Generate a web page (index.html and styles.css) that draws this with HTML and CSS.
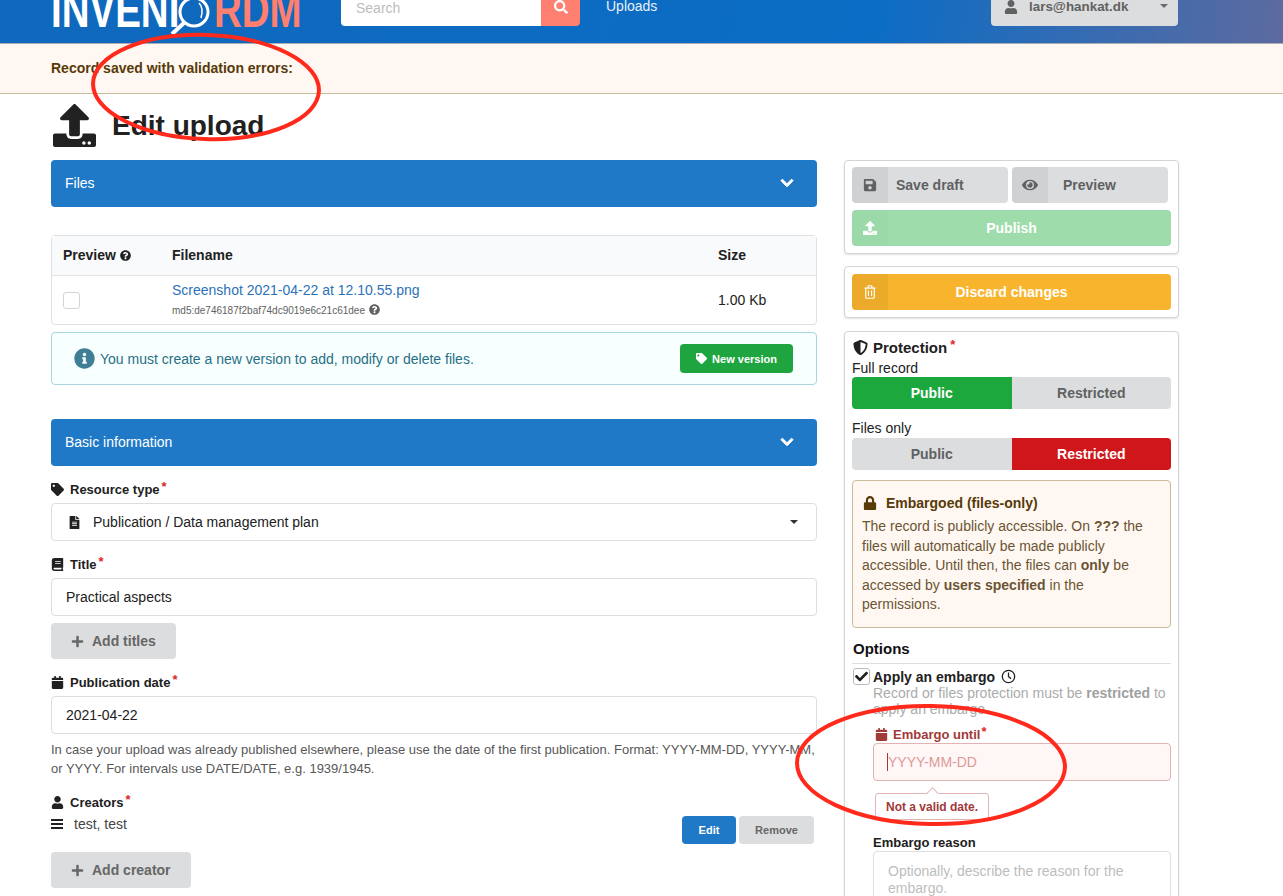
FILE: index.html
```html
<!DOCTYPE html>
<html lang="en">
<head>
    <meta charset="UTF-8">
    <meta name="viewport" content="width=device-width, initial-scale=1.0">
    <title>Edit upload</title>
    <link rel="stylesheet" href="styles.css">
</head>
<body>
    <svg class="icon-defs" aria-hidden="true">
        <symbol id="i-upload" viewBox="0 0 512 512"><path d="M296 384h-80c-13.3 0-24-10.7-24-24V192h-87.7c-17.8 0-26.7-21.5-14.1-34.1L242.3 5.7c7.5-7.5 19.8-7.5 27.3 0l152.2 152.2c12.6 12.6 3.7 34.1-14.1 34.1H320v168c0 13.3-10.7 24-24 24zm216-8v112c0 13.3-10.7 24-24 24H24c-13.3 0-24-10.7-24-24V376c0-13.3 10.7-24 24-24h136v8c0 30.9 25.1 56 56 56h80c30.9 0 56-25.1 56-56v-8h136c13.3 0 24 10.7 24 24zm-124 88c0-11-9-20-20-20s-20 9-20 20 9 20 20 20 20-9 20-20zm64 0c0-11-9-20-20-20s-20 9-20 20 9 20 20 20 20-9 20-20z"/></symbol>
        <symbol id="i-search" viewBox="0 0 512 512"><path d="M505 442.7L405.3 343c-4.5-4.5-10.6-7-17-7H372c27.6-35.3 44-79.7 44-128C416 93.1 322.9 0 208 0S0 93.1 0 208s93.1 208 208 208c48.3 0 92.7-16.4 128-44v16.3c0 6.4 2.5 12.5 7 17l99.7 99.7c9.4 9.4 24.6 9.4 33.9 0l28.3-28.3c9.4-9.4 9.4-24.6.1-34zM208 336c-70.7 0-128-57.2-128-128 0-70.7 57.2-128 128-128 70.7 0 128 57.2 128 128 0 70.7-57.2 128-128 128z"/></symbol>
        <symbol id="i-user" viewBox="0 0 448 512"><path d="M224 256c70.7 0 128-57.3 128-128S294.7 0 224 0 96 57.3 96 128s57.3 128 128 128zm89.6 32h-16.7c-22.2 10.2-46.9 16-72.9 16s-50.6-5.8-72.9-16h-16.7C60.2 288 0 348.2 0 422.4V464c0 26.5 21.5 48 48 48h352c26.5 0 48-21.5 48-48v-41.6c0-74.2-60.2-134.4-134.4-134.4z"/></symbol>
        <symbol id="i-chevron" viewBox="0 0 448 512"><path d="M207.029 381.476L12.686 187.132c-9.373-9.373-9.373-24.569 0-33.941l22.667-22.667c9.357-9.357 24.522-9.375 33.901-.04L224 284.505l154.745-154.021c9.379-9.335 24.544-9.317 33.901.04l22.667 22.667c9.373 9.373 9.373 24.569 0 33.941L240.971 381.476c-9.373 9.372-24.569 9.372-33.942 0z"/></symbol>
        <symbol id="i-save" viewBox="0 0 448 512"><path d="M433.941 129.941l-83.882-83.882A48 48 0 0 0 316.118 32H48C21.49 32 0 53.49 0 80v352c0 26.51 21.49 48 48 48h352c26.51 0 48-21.49 48-48V163.882a48 48 0 0 0-14.059-33.941zM224 416c-35.346 0-64-28.654-64-64 0-35.346 28.654-64 64-64s64 28.654 64 64c0 35.346-28.654 64-64 64zm96-304.52V212c0 6.627-5.373 12-12 12H76c-6.627 0-12-5.373-12-12V108c0-6.627 5.373-12 12-12h228.52c3.183 0 6.235 1.264 8.485 3.515l3.48 3.48A11.996 11.996 0 0 1 320 111.48z"/></symbol>
        <symbol id="i-eye" viewBox="0 0 576 512"><path d="M572.52 241.4C518.29 135.59 410.93 64 288 64S57.68 135.64 3.48 241.41a32.35 32.35 0 0 0 0 29.19C57.71 376.41 165.07 448 288 448s230.32-71.64 284.52-177.41a32.35 32.35 0 0 0 0-29.19zM288 400a144 144 0 1 1 144-144 143.93 143.93 0 0 1-144 144zm0-240a95.31 95.31 0 0 0-25.31 3.79 47.85 47.85 0 0 1-66.9 66.9A95.78 95.78 0 1 0 288 160z"/></symbol>
        <symbol id="i-trash" viewBox="0 0 16 18"><path d="M1 4h14M5.5 4V2a1 1 0 0 1 1-1h3a1 1 0 0 1 1 1v2M2.5 4v12a1 1 0 0 0 1 1h9a1 1 0 0 0 1-1V4M6 7v7M10 7v7" fill="none" stroke="currentColor" stroke-width="1.5"/></symbol>
        <symbol id="i-question" viewBox="0 0 512 512"><path d="M504 256c0 136.997-111.043 248-248 248S8 392.997 8 256C8 119.083 119.043 8 256 8s248 111.083 248 248zM262.655 90c-54.497 0-89.255 22.957-116.549 63.758-3.536 5.286-2.353 12.415 2.715 16.258l34.699 26.31c5.205 3.947 12.621 3.008 16.665-2.122 17.864-22.658 30.113-35.797 57.303-35.797 20.429 0 45.698 13.148 45.698 32.958 0 14.976-12.363 22.667-32.534 33.976C247.128 238.528 216 254.941 216 296v4c0 6.627 5.373 12 12 12h56c6.627 0 12-5.373 12-12v-1.333c0-28.462 83.186-29.647 83.186-106.667 0-58.002-60.165-102-116.531-102zM256 338c-25.365 0-46 20.635-46 46 0 25.364 20.635 46 46 46s46-20.636 46-46c0-25.365-20.635-46-46-46z"/></symbol>
        <symbol id="i-info" viewBox="0 0 512 512"><path d="M256 8C119.043 8 8 119.083 8 256c0 136.997 111.043 248 248 248s248-111.003 248-248C504 119.083 392.957 8 256 8zm0 110c23.196 0 42 18.804 42 42s-18.804 42-42 42-42-18.804-42-42 18.804-42 42-42zm56 254c0 6.627-5.373 12-12 12h-88c-6.627 0-12-5.373-12-12v-24c0-6.627 5.373-12 12-12h12v-64h-12c-6.627 0-12-5.373-12-12v-24c0-6.627 5.373-12 12-12h64c6.627 0 12 5.373 12 12v100h12c6.627 0 12 5.373 12 12v24z"/></symbol>
        <symbol id="i-tag" viewBox="0 0 512 512"><path d="M0 252.118V48C0 21.49 21.49 0 48 0h204.118a48 48 0 0 1 33.941 14.059l211.882 211.882c18.745 18.745 18.745 49.137 0 67.882L293.823 497.941c-18.745 18.745-49.137 18.745-67.882 0L14.059 286.059A48 48 0 0 1 0 252.118zM112 64c-26.51 0-48 21.49-48 48s21.49 48 48 48 48-21.49 48-48-21.49-48-48-48z"/></symbol>
        <symbol id="i-file" viewBox="0 0 384 512"><path d="M224 136V0H24C10.7 0 0 10.7 0 24v464c0 13.3 10.7 24 24 24h336c13.3 0 24-10.7 24-24V160H248c-13.2 0-24-10.8-24-24zm64 236c0 6.6-5.4 12-12 12H108c-6.6 0-12-5.4-12-12v-8c0-6.6 5.4-12 12-12h168c6.6 0 12 5.4 12 12v8zm0-64c0 6.6-5.4 12-12 12H108c-6.6 0-12-5.4-12-12v-8c0-6.6 5.4-12 12-12h168c6.6 0 12 5.4 12 12v8zm0-72v8c0 6.6-5.4 12-12 12H108c-6.6 0-12-5.4-12-12v-8c0-6.6 5.4-12 12-12h168c6.6 0 12 5.4 12 12zm96-114.1v6.1H256V0h6.1c6.4 0 12.5 2.5 17 7l97.9 98c4.5 4.5 7 10.6 7 16.9z"/></symbol>
        <symbol id="i-book" viewBox="0 0 448 512"><path d="M448 360V24c0-13.3-10.7-24-24-24H96C43 0 0 43 0 96v320c0 53 43 96 96 96h328c13.3 0 24-10.7 24-24v-16c0-7.5-3.5-14.3-8.9-18.7-4.2-15.4-4.2-59.3 0-74.7 5.4-4.3 8.9-11.1 8.9-18.6zM128 134c0-3.3 2.7-6 6-6h212c3.3 0 6 2.7 6 6v20c0 3.3-2.7 6-6 6H134c-3.3 0-6-2.7-6-6v-20zm0 64c0-3.3 2.7-6 6-6h212c3.3 0 6 2.7 6 6v20c0 3.3-2.7 6-6 6H134c-3.3 0-6-2.7-6-6v-20zm253.4 250H96c-17.7 0-32-14.3-32-32 0-17.6 14.4-32 32-32h285.4c-1.9 17.1-1.9 46.9 0 64z"/></symbol>
        <symbol id="i-calendar" viewBox="0 0 448 512"><path d="M12 192h424c6.6 0 12 5.4 12 12v260c0 26.5-21.5 48-48 48H48c-26.5 0-48-21.5-48-48V204c0-6.6 5.4-12 12-12zm436-44v-36c0-26.5-21.5-48-48-48h-48V12c0-6.6-5.4-12-12-12h-40c-6.6 0-12 5.4-12 12v52H160V12c0-6.6-5.4-12-12-12h-40c-6.6 0-12 5.4-12 12v52H48C21.5 64 0 85.5 0 112v36c0 6.6 5.4 12 12 12h424c6.6 0 12-5.4 12-12z"/></symbol>
        <symbol id="i-plus" viewBox="0 0 448 512"><path d="M416 208H272V64c0-17.67-14.33-32-32-32h-32c-17.67 0-32 14.33-32 32v144H32c-17.67 0-32 14.33-32 32v32c0 17.67 14.33 32 32 32h144v144c0 17.67 14.33 32 32 32h32c17.67 0 32-14.33 32-32V304h144c17.67 0 32-14.33 32-32v-32c0-17.67-14.33-32-32-32z"/></symbol>
        <symbol id="i-lock" viewBox="0 0 448 512"><path d="M400 224h-24v-72C376 68.2 307.8 0 224 0S72 68.2 72 152v72H48c-26.5 0-48 21.5-48 48v192c0 26.5 21.5 48 48 48h352c26.5 0 48-21.5 48-48V272c0-26.5-21.5-48-48-48zm-104 0H152v-72c0-39.7 32.3-72 72-72s72 32.3 72 72v72z"/></symbol>
        <symbol id="i-shield" viewBox="0 0 512 512"><path d="M466.5 83.7l-192-80a48.15 48.15 0 0 0-36.9 0l-192 80C27.7 91.1 16 108.6 16 128c0 198.5 114.5 335.7 221.5 380.3 11.8 4.9 25.1 4.9 36.9 0C360.1 472.6 496 349.3 496 128c0-19.4-11.7-36.9-29.5-44.3zM256.1 446.3l-.1-381 175.9 73.3c-3.3 151.4-82.1 261.1-175.8 307.7z"/></symbol>
        <symbol id="i-check" viewBox="0 0 512 512"><path d="M173.898 439.404l-166.4-166.4c-9.997-9.997-9.997-26.206 0-36.204l36.203-36.204c9.997-9.998 26.207-9.998 36.204 0L192 312.69 432.095 72.596c9.997-9.997 26.207-9.997 36.204 0l36.203 36.204c9.997 9.997 9.997 26.206 0 36.204l-294.4 294.401c-9.998 9.997-26.207 9.997-36.204-.001z"/></symbol>
        <symbol id="i-clock" viewBox="0 0 16 16"><circle cx="8" cy="8" r="6.6" fill="none" stroke="currentColor" stroke-width="1.4"/><path d="M8 3.8V8.3l2.8 2" fill="none" stroke="currentColor" stroke-width="1.4"/></symbol>
        <symbol id="i-bars" viewBox="0 0 12 12"><path d="M0 1h12v2H0zM0 5h12v2H0zM0 9h12v2H0z"/></symbol>
    </svg>

    <div class="page">
        <header class="topbar">
            <a class="logo">
                <span class="logo-word logo-invenio">INVENI</span>
                <span class="logo-word logo-rdm">RDM</span>
                <svg class="logo-lens" viewBox="0 0 50 40"><circle cx="24" cy="12" r="14" fill="none" stroke="#fff" stroke-width="3"/><path d="M15 22L2 34" fill="none" stroke="#fff" stroke-width="4"/><path d="M29 3q5 5 2 15" fill="none" stroke="#fff" stroke-width="1.5"/></svg>
            </a>
            <div class="search">
                <input class="search-input" type="text" placeholder="Search">
                <button class="search-btn"><svg class="icon icon-14"><use href="#i-search"/></svg></button>
            </div>
            <a class="nav-link">Uploads</a>
            <div class="user-menu">
                <svg class="icon icon-14"><use href="#i-user"/></svg>
                <span class="user-name">lars@hankat.dk</span>
                <span class="caret"></span>
            </div>
        </header>

        <div class="flash">Record saved with validation errors:</div>

        <div class="page-title">
            <svg class="title-icon"><use href="#i-upload"/></svg>
            <h1>Edit upload</h1>
        </div>

        <main class="columns">
            <section class="col-left">
                <div class="acc-head">
                    <span>Files</span>
                    <svg class="icon icon-14 chevron"><use href="#i-chevron"/></svg>
                </div>

                <table class="files">
                    <thead>
                        <tr>
                            <th class="col-preview">Preview <svg class="icon icon-11"><use href="#i-question"/></svg></th>
                            <th class="col-name">Filename</th>
                            <th>Size</th>
                        </tr>
                    </thead>
                    <tbody>
                        <tr>
                            <td><span class="checkbox"></span></td>
                            <td>
                                <a class="file-link">Screenshot 2021-04-22 at 12.10.55.png</a>
                                <div class="md5">md5:de746187f2baf74dc9019e6c21c61dee <svg class="icon icon-11"><use href="#i-question"/></svg></div>
                            </td>
                            <td>1.00 Kb</td>
                        </tr>
                    </tbody>
                </table>

                <div class="info-msg">
                    <svg class="info-icon"><use href="#i-info"/></svg>
                    <span class="info-text">You must create a new version to add, modify or delete files.</span>
                    <button class="btn-new"><svg class="icon icon-11"><use href="#i-tag"/></svg>New version</button>
                </div>

                <div class="acc-head acc-basic">
                    <span>Basic information</span>
                    <svg class="icon icon-14 chevron"><use href="#i-chevron"/></svg>
                </div>

                <label class="field-label"><svg class="icon icon-13"><use href="#i-tag"/></svg>Resource type<sup>*</sup></label>
                <div class="select">
                    <svg class="icon icon-13"><use href="#i-file"/></svg>
                    <span>Publication / Data management plan</span>
                    <span class="caret caret-dark"></span>
                </div>

                <label class="field-label"><svg class="icon icon-13"><use href="#i-book"/></svg>Title<sup>*</sup></label>
                <input class="text-input" type="text" value="Practical aspects">
                <button class="btn-add btn-titles"><svg class="icon icon-13"><use href="#i-plus"/></svg>Add titles</button>

                <label class="field-label"><svg class="icon icon-13"><use href="#i-calendar"/></svg>Publication date<sup>*</sup></label>
                <input class="text-input" type="text" value="2021-04-22">
                <p class="help">In case your upload was already published elsewhere, please use the date of the first publication. Format: YYYY-MM-DD, YYYY-MM, or YYYY. For intervals use DATE/DATE, e.g. 1939/1945.</p>

                <label class="field-label field-creators"><svg class="icon icon-13"><use href="#i-user"/></svg>Creators<sup>*</sup></label>
                <div class="creator-row">
                    <svg class="icon icon-12"><use href="#i-bars"/></svg>
                    <span class="creator-name">test, test</span>
                    <button class="btn-small btn-edit">Edit</button>
                    <button class="btn-small btn-remove">Remove</button>
                </div>
                <button class="btn-add btn-creator"><svg class="icon icon-13"><use href="#i-plus"/></svg>Add creator</button>
            </section>

            <aside class="col-right">
                <div class="card">
                    <div class="action-row">
                        <button class="btn-labeled btn-grey"><span class="btn-ico"><svg class="icon icon-14"><use href="#i-save"/></svg></span><span class="btn-text btn-text-left">Save draft</span></button>
                        <button class="btn-labeled btn-grey"><span class="btn-ico"><svg class="icon icon-16"><use href="#i-eye"/></svg></span><span class="btn-text btn-text-left">Preview</span></button>
                    </div>
                    <button class="btn-labeled btn-publish"><span class="btn-ico"><svg class="icon icon-14"><use href="#i-upload"/></svg></span><span class="btn-text">Publish</span></button>
                </div>

                <div class="card card-discard">
                    <button class="btn-labeled btn-discard"><span class="btn-ico"><svg class="icon icon-14"><use href="#i-trash"/></svg></span><span class="btn-text">Discard changes</span></button>
                </div>

                <div class="card card-protection">
                    <div class="prot-head"><svg class="icon icon-15"><use href="#i-shield"/></svg>Protection<sup>*</sup></div>
                    <div class="prot-sub">Full record</div>
                    <div class="toggle">
                        <span class="toggle-opt toggle-green">Public</span>
                        <span class="toggle-opt">Restricted</span>
                    </div>
                    <div class="prot-sub prot-files">Files only</div>
                    <div class="toggle">
                        <span class="toggle-opt">Public</span>
                        <span class="toggle-opt toggle-red">Restricted</span>
                    </div>

                    <div class="embargo-box">
                        <div class="embargo-title"><svg class="icon icon-14"><use href="#i-lock"/></svg>Embargoed (files-only)</div>
                        <p>The record is publicly accessible. On <b>???</b> the files will automatically be made publicly accessible. Until then, the files can <b>only</b> be accessed by <b>users specified</b> in the permissions.</p>
                    </div>

                    <div class="options-head">Options</div>
                    <div class="option-row">
                        <span class="checkbox checkbox-on"><svg class="icon icon-13"><use href="#i-check"/></svg></span>
                        <span class="option-name">Apply an embargo</span>
                        <svg class="icon icon-15"><use href="#i-clock"/></svg>
                    </div>
                    <div class="option-body">
                        <p class="option-help">Record or files protection must be <b>restricted</b> to apply an embargo.</p>
                        <label class="field-label label-error"><svg class="icon icon-13"><use href="#i-calendar"/></svg>Embargo until<sup>*</sup></label>
                        <div class="date-wrap">
                            <input class="text-input input-error" type="text" placeholder="YYYY-MM-DD">
                            <span class="text-caret"></span>
                        </div>
                        <div class="error-tip">Not a valid date.</div>
                        <label class="field-label label-reason">Embargo reason</label>
                        <textarea class="reason" placeholder="Optionally, describe the reason for the embargo."></textarea>
                    </div>
                </div>
            </aside>
        </main>

        <svg class="scribble" viewBox="0 0 1283 896">
            <ellipse cx="206" cy="87" rx="113" ry="52" transform="rotate(2 206 87)"/>
            <ellipse cx="931" cy="765" rx="134" ry="59" transform="rotate(1 931 765)"/>
        </svg>
    </div>
</body>
</html>
```

FILE: styles.css
```css
* {
    box-sizing: border-box;
}
html, body {
    margin: 0;
    overflow: hidden;
}
body {
    font-family: "Liberation Sans", Arial, sans-serif;
    font-size: 14px;
    color: #212121;
    background-color: #fff;
}
button, input, textarea {
    font-family: inherit;
}
.icon-defs {
    display: none;
}
.page {
    position: relative;
    height: 896px;
    overflow: hidden;
}
.icon {
    fill: currentColor;
    flex: none;
}
.icon-11 { width: 11px; height: 11px; }
.icon-12 { width: 12px; height: 12px; }
.icon-13 { width: 13px; height: 13px; }
.icon-14 { width: 14px; height: 14px; }
.icon-15 { width: 15px; height: 15px; }
.icon-16 { width: 16px; height: 16px; }

/* top bar, cropped by the top of the window */
.topbar {
    height: 44px;
    display: flex;
    align-items: flex-end;
    padding: 0 105px 18px 51px;
    overflow: hidden;
    background: linear-gradient(100deg, #0f68bc 0%, #0b6dc5 68%, #5d6aa0 100%);
    border-bottom: 1px solid #a9aeb3;
}
.logo {
    position: relative;
    flex: none;
    width: 290px;
    height: 36px;
    margin-bottom: -3px;
    display: flex;
}
.logo-word {
    display: block;
    font-size: 50px;
    line-height: 36px;
    font-weight: bold;
    transform: scaleX(0.77);
    transform-origin: left;
    white-space: nowrap;
}
.logo-invenio {
    width: 163px;
    color: #fff;
}
.logo-rdm {
    color: #ff7f70;
}
.logo-lens {
    position: absolute;
    left: 119px;
    top: 8px;
    width: 50px;
    height: 40px;
    overflow: visible;
}
.search {
    width: 239px;
    height: 36px;
    display: flex;
    flex: none;
    border-radius: 4px;
    overflow: hidden;
    margin-bottom: -1px;
}
.search-input {
    flex: 1;
    min-width: 0;
    border: 0;
    padding: 0 15px;
    font-size: 14px;
    background-color: #fff;
}
.search-input::placeholder {
    color: #bdbdbd;
}
.search-btn {
    width: 39px;
    border: 0;
    padding: 0;
    color: #fff;
    background-color: #ff7f70;
}
.nav-link {
    margin: 0 auto 11px 26px;
    color: #e8f0f8;
}
.user-menu {
    width: 187px;
    height: 36px;
    display: flex;
    align-items: center;
    flex: none;
    padding: 0 10px 0 13px;
    margin-bottom: -1px;
    border-radius: 0 0 4px 4px;
    background-color: #dcddde;
    color: #616161;
    font-size: 13.4px;
    font-weight: bold;
}
.user-menu .icon {
    align-self: flex-end;
    margin-bottom: 12px;
}
.user-name {
    margin-left: 11px;
    align-self: flex-end;
    margin-bottom: 12px;
}
.caret {
    width: 0;
    height: 0;
    margin-left: auto;
    margin-bottom: 4px;
    border-left: 4px solid transparent;
    border-right: 4px solid transparent;
    border-top: 4px solid #6b6b6b;
}
.flash {
    height: 50px;
    padding: 16px 51px 0;
    font-weight: bold;
    color: #573a08;
    background-color: #fff8f2;
    border-bottom: 1px solid #c9ba9b;
}
.page-title {
    height: 66px;
    display: flex;
    align-items: center;
    padding: 0 0 4px 53px;
}
.title-icon {
    width: 43px;
    height: 43px;
    fill: #212121;
}
h1 {
    margin: 2px 0 0 16px;
    font-size: 28px;
    line-height: 32px;
    font-weight: bold;
}

.columns {
    display: flex;
    padding-left: 51px;
}
.col-left {
    flex: none;
    width: 766px;
}
.col-right {
    flex: none;
    width: 335px;
    margin-left: 27px;
}

/* left column */
.acc-head {
    height: 47px;
    padding: 0 23px 2px 14px;
    display: flex;
    align-items: center;
    justify-content: space-between;
    color: #fff;
    background-color: #2079c7;
    border-radius: 4px;
}
.chevron {
    stroke: currentColor;
    stroke-width: 36;
}
.files {
    width: 100%;
    height: 90px;
    margin-top: 28px;
    border: 1px solid #e0e1e2;
    border-radius: 4px;
    border-spacing: 0;
    table-layout: fixed;
}
.files th {
    height: 40px;
    padding: 0 0 2px 11px;
    text-align: left;
    background-color: #f9fafb;
    border-bottom: 1px solid #e3e4e5;
}
.files th .icon {
    vertical-align: -1px;
}
.files td {
    padding: 0 0 0 11px;
}
.col-preview {
    width: 109px;
}
.col-name {
    width: 546px;
}
.file-link {
    color: #2b72b8;
}
.md5 {
    margin-top: 6px;
    font-size: 10px;
    line-height: 14px;
    color: #616161;
}
.md5 .icon {
    vertical-align: -1px;
    margin-left: 1px;
}
.checkbox {
    display: flex;
    align-items: center;
    justify-content: center;
    width: 17px;
    height: 17px;
    border: 1px solid #d4d4d5;
    border-radius: 3px;
    background-color: #fff;
}
.info-msg {
    height: 53px;
    margin-top: 7px;
    padding: 0 23px 0 24px;
    display: flex;
    align-items: center;
    color: #276f86;
    background-color: #f8ffff;
    border: 1px solid #a9d5de;
    border-radius: 4px;
}
.info-icon {
    width: 21px;
    height: 21px;
    flex: none;
    fill: #3f7f96;
    margin-left: -2px;
}
.info-text {
    margin-left: 5px;
}
.btn-new {
    width: 113px;
    height: 29px;
    margin-left: auto;
    border: 0;
    border-radius: 4px;
    color: #fff;
    font-size: 11px;
    font-weight: bold;
    background-color: #1fa53f;
    display: flex;
    align-items: center;
    justify-content: center;
    gap: 5px;
}
.acc-basic {
    margin-top: 34px;
}
.field-label {
    display: flex;
    align-items: center;
    gap: 6px;
    height: 16px;
    margin: 15px 0 6px;
    font-size: 13px;
    font-weight: bold;
}
.field-label sup {
    color: #db2828;
    font-size: 13px;
    line-height: 1;
    margin: -6px 0 0 -4px;
}
.select, .text-input {
    width: 100%;
    height: 38px;
    display: flex;
    align-items: center;
    padding: 0 14px;
    font-size: 14px;
    color: #212121;
    background-color: #fff;
    border: 1px solid #dedede;
    border-radius: 4px;
}
.select {
    padding: 0 18px 0 16px;
}
.select span:first-of-type {
    margin-left: 12px;
}
.caret-dark {
    margin-bottom: 0;
    border-top-color: #333;
}
.btn-add {
    height: 36px;
    display: flex;
    align-items: center;
    border: 0;
    padding: 0 0 0 20px;
    gap: 8px;
    font-size: 14px;
    font-weight: bold;
    color: #666;
    background-color: #dcddde;
    border-radius: 4px;
}
.btn-titles {
    width: 125px;
    margin-top: 7px;
}
.btn-creator {
    width: 140px;
    margin-top: 8px;
}
.help {
    margin: 6px 0 0;
    font-size: 13px;
    line-height: 19px;
    color: #575757;
}
.field-creators {
    margin-top: 16px;
}
.creator-row {
    height: 28px;
    display: flex;
    align-items: flex-start;
    padding-right: 3px;
    gap: 3px;
}
.creator-row > .icon {
    margin-top: 2px;
}
.creator-name {
    margin: 0 auto 0 8px;
    line-height: 16px;
    color: #444;
}
.btn-small {
    height: 28px;
    border: 0;
    border-radius: 4px;
    font-size: 11px;
    font-weight: bold;
}
.btn-edit {
    width: 54px;
    color: #fff;
    background-color: #2079c7;
}
.btn-remove {
    width: 75px;
    color: #666;
    background-color: #dcddde;
}

/* right column */
.card {
    padding: 6px 7px 7px;
    background-color: #fff;
    border: 1px solid #d4d4d5;
    border-radius: 4px;
    box-shadow: 0 1px 2px rgba(34, 36, 38, 0.12);
}
.action-row {
    display: flex;
    gap: 4px;
    margin-bottom: 7px;
}
.btn-labeled {
    width: 100%;
    height: 36px;
    display: flex;
    align-items: center;
    padding: 0;
    border: 0;
    border-radius: 4px;
    overflow: hidden;
    font-size: 14px;
    font-weight: bold;
}
.btn-ico {
    width: 36px;
    height: 100%;
    flex: none;
    display: flex;
    align-items: center;
    justify-content: center;
    background-color: rgba(0, 0, 0, 0.05);
}
.btn-text {
    flex: 1;
    text-align: center;
    padding-right: 36px;
}
.btn-text-left {
    text-align: left;
    padding: 0 0 0 8px;
}
.btn-grey {
    width: 156px;
    color: #5f6163;
    background-color: #dcddde;
}
.btn-grey + .btn-grey .btn-text-left {
    padding-left: 15px;
}
.btn-publish {
    color: #fff;
    background-color: #9edcab;
}
.btn-publish .btn-ico {
    background-color: rgba(0, 0, 0, 0.01);
}
.btn-discard {
    color: #fff;
    background-color: #f9b42d;
}
.card-discard {
    margin-top: 12px;
    padding: 7px;
}
.card-protection {
    margin-top: 13px;
    padding: 6px 7px 7px;
    height: 600px;
}
.prot-head {
    height: 19px;
    display: flex;
    align-items: center;
    gap: 5px;
    margin-left: 1px;
    font-size: 15px;
    font-weight: bold;
    white-space: nowrap;
}
.prot-head sup {
    color: #db2828;
    font-size: 13px;
    line-height: 1;
    margin: -6px 0 0 -2px;
}
.prot-sub {
    height: 18px;
    margin-top: 2px;
    line-height: 18px;
}
.prot-files {
    margin-top: 10px;
    height: 19px;
}
.toggle {
    width: 319px;
    height: 32px;
    display: flex;
    border-radius: 4px;
    overflow: hidden;
}
.toggle-opt {
    flex: 1;
    display: flex;
    align-items: center;
    justify-content: center;
    font-weight: bold;
    color: #5f6163;
    background-color: #dcddde;
}
.toggle-green {
    color: #fff;
    background-color: #1ca83d;
}
.toggle-red {
    color: #fff;
    background-color: #cf171b;
}
.embargo-box {
    width: 319px;
    height: 148px;
    margin-top: 10px;
    padding: 13px 9px;
    color: #6b5433;
    background-color: #fff8f2;
    border: 1px solid #c9ba9b;
    border-radius: 4px;
}
.embargo-box p {
    margin: 5px 0 0;
    line-height: 19.6px;
}
.embargo-title {
    height: 18px;
    display: flex;
    align-items: center;
    gap: 9px;
    font-weight: bold;
    color: #573a08;
    padding-left: 1px;
}
.options-head {
    height: 24px;
    margin-top: 12px;
    padding-left: 1px;
    border-bottom: 1px solid #dedede;
    font-size: 15px;
    line-height: 18px;
    font-weight: bold;
    color: #111;
}
.option-row {
    display: flex;
    align-items: center;
    height: 17px;
    margin-top: 4px;
    padding-left: 1px;
}
.checkbox-on {
    border-color: #bbb;
}
.option-name {
    margin: 0 6px 0 3px;
    font-weight: bold;
}
.option-body {
    margin-left: 21px;
}
.option-help {
    width: 296px;
    margin: 0;
    color: #ababab;
    line-height: 16px;
}
.option-help b {
    color: #a0a0a0;
}
.label-error {
    margin: 9px 0 1px 2px;
    gap: 5px;
    color: #9f3a38;
}
.date-wrap {
    position: relative;
    width: 298px;
}
.input-error {
    background-color: #fff6f6;
    border-color: #e0b4b4;
}
.input-error::placeholder {
    color: #dc9a98;
    opacity: 1;
}
.text-caret {
    position: absolute;
    left: 14px;
    top: 10px;
    width: 1px;
    height: 18px;
    background-color: #9f3a38;
}
.error-tip {
    position: relative;
    width: 114px;
    height: 27px;
    margin: 12px 0 0 2px;
    text-align: center;
    line-height: 27px;
    font-size: 12px;
    font-weight: bold;
    color: #9f3a38;
    background-color: #fff;
    border: 1px solid #e0b4b4;
    border-radius: 3px;
}
.error-tip::before {
    content: "";
    position: absolute;
    left: 52px;
    top: -5px;
    width: 8px;
    height: 8px;
    background-color: #fff;
    border-left: 1px solid #e0b4b4;
    border-top: 1px solid #e0b4b4;
    transform: rotate(45deg);
}
.label-reason {
    margin: 14px 0 1px;
}
.reason {
    display: block;
    width: 298px;
    height: 80px;
    padding: 11px 14px;
    font-size: 14px;
    line-height: 17px;
    border: 1px solid #dedede;
    border-radius: 4px;
    resize: none;
}
.reason::placeholder {
    color: #bdbdbd;
    opacity: 1;
}

/* hand drawn marks on top of the screenshot */
.scribble {
    position: absolute;
    left: 0;
    top: 0;
    width: 1283px;
    height: 896px;
    pointer-events: none;
    fill: none;
    stroke: #ff2a1c;
    stroke-width: 4;
}
```
